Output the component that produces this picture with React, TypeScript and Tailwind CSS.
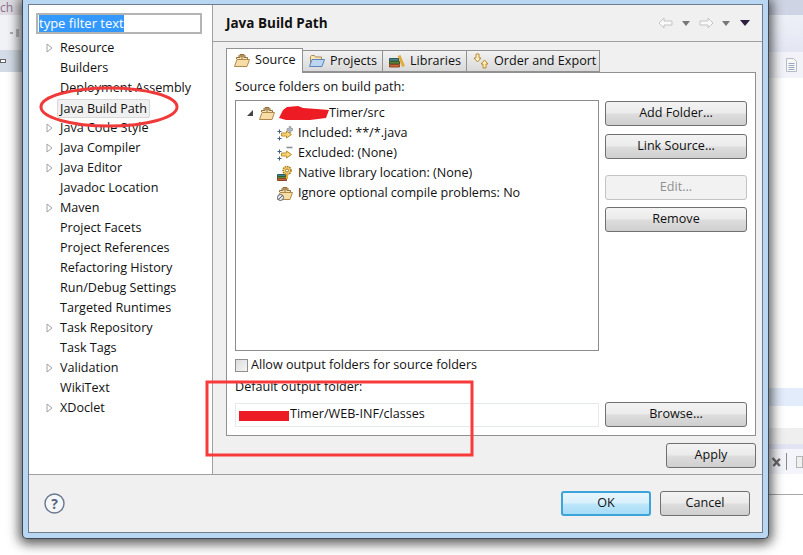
const TREE: [string, boolean][] = [
  ["Resource", true],
  ["Builders", false],
  ["Deployment Assembly", false],
  ["Java Build Path", false],
  ["Java Code Style", true],
  ["Java Compiler", true],
  ["Java Editor", true],
  ["Javadoc Location", false],
  ["Maven", true],
  ["Project Facets", false],
  ["Project References", false],
  ["Refactoring History", false],
  ["Run/Debug Settings", false],
  ["Targeted Runtimes", false],
  ["Task Repository", true],
  ["Task Tags", false],
  ["Validation", true],
  ["WikiText", false],
  ["XDoclet", true],
];

function SourceFolder({ blocked }: { blocked?: boolean }) {
  return (
    <svg width="16" height="15" viewBox="0 0 16 15" className="shrink-0">
      <path d="M2.5 6V4.5h3.5V1.5h4V4.5h3.5V7" fill="#f6e2b8" stroke="#94713a" />
      <path d="M4 3h8M8 1v5" stroke="#94713a" fill="none" />
      <path d="M.5 13.5L3 6.5h12.5L13 13.5z" fill="#f7dca6" stroke="#b08a4c" />
      {blocked && (
        <>
          <circle cx="3.5" cy="11.5" r="3" fill="#e5e7eb" stroke="#5b6472" />
          <path d="M1.5 13.5l4-4" stroke="#5b6472" />
        </>
      )}
    </svg>
  );
}

function BlueFolder() {
  return (
    <svg width="16" height="14" viewBox="0 0 16 14" className="shrink-0">
      <path d="M1.5 11V2.5l1-1h3l1 1.5h6v2.5" fill="#fbe7b8" stroke="#a98d55" />
      <path d="M.5 12.5L3 5.5h12.5L13 12.5z" fill="#bcd6f2" stroke="#5f86b8" />
    </svg>
  );
}

function Books() {
  return (
    <svg width="16" height="14" viewBox="0 0 16 14" className="shrink-0">
      <path d="M10 1.5l4.5 11" stroke="#e2a93b" strokeWidth="3" fill="none" />
      <path d="M.5 4.5h9v2.5h-9z" fill="#4a8a8c" stroke="#2e5a60" />
      <path d="M.5 7.5h10v2.5H.5z" fill="#5f7f3a" stroke="#3f5a28" />
      <path d="M.5 10.5h10v2.5H.5z" fill="#c9683a" stroke="#8a4526" />
    </svg>
  );
}

function UpDown() {
  return (
    <svg width="16" height="16" viewBox="0 0 16 16" className="shrink-0">
      <path d="M3 1h3v4h2l-3.5 4L1 5h2z" fill="#fdf3cf" stroke="#b98a2f" />
      <path d="M10 15h3v-4h2l-3.5-4L8 11h2z" fill="#fdeeb8" stroke="#b98a2f" />
    </svg>
  );
}

function FilterIcon({ plus }: { plus?: boolean }) {
  return (
    <svg width="16" height="15" viewBox="0 0 16 15" className="shrink-0">
      <path d="M.5 5.5h4M2.5 3.5v4M.5 12.5h4M2.5 10.5v4" stroke="#3f5f7f" fill="none" />
      <path d="M4.5 7h5V5l5 3.5-5 3.5v-2h-5z" fill="#f8d577" stroke="#bb8f33" />
      {plus ? (
        <path d="M10 2.5h2V.5h2v2h2v2h-2v2h-2v-2h-2z" fill="#b5b9c0" stroke="#7c828c" strokeWidth=".5" />
      ) : (
        <path d="M9.500 1.500h6" stroke="#8a8f98" strokeWidth="1.600" fill="none" />
      )}
    </svg>
  );
}

function NativeLib() {
  return (
    <svg width="16" height="16" viewBox="0 0 16 16" className="shrink-0">
      <path d="M.5 9.500h8v2h-8z" fill="#3f8a8c" stroke="#2e5a60" />
      <path d="M.5 11.500h9v2h-9z" fill="#5f8f3a" stroke="#3f5a28" />
      <path d="M.5 13.500h9v2h-9z" fill="#c9683a" stroke="#8a4526" />
      <circle cx="10" cy="5.500" r="4" fill="#f3cf72" stroke="#a87f2c" strokeWidth="1.600" strokeDasharray="1.500 .8" />
      <circle cx="10" cy="5.500" r="1.500" fill="#fff" stroke="#a87f2c" />
      <path d="M10 9v5" stroke="#e2a93b" strokeWidth="2" />
    </svg>
  );
}

function Arrow({ open }: { open?: boolean }) {
  return open ? (
    <svg width="8" height="8" viewBox="0 0 8 8" className="shrink-0">
      <path d="M1 7h6V1z" fill="#444" />
    </svg>
  ) : (
    <svg width="7" height="10" viewBox="0 0 7 10" className="shrink-0">
      <path d="M1 1l5 4-5 4z" fill="#fff" stroke="#a3a3a3" />
    </svg>
  );
}

function Btn({ label, width = "w-[142px]", disabled }: { label: string; width?: string; disabled?: boolean }) {
  return (
    <div
      className={`flex h-[25px] items-center justify-center rounded-[3px] border text-[12.6px] ${width} ${
        disabled
          ? "border-[#c4c4c4] bg-[#f2f2f2] text-[#909090]"
          : "border-[#707070] bg-[linear-gradient(#f3f3f3_0%,#ebebeb_48%,#dddddd_52%,#cfcfcf_100%)] text-[#111]"
      }`}
    >
      {label}
    </div>
  );
}

function TabItem({ label, icon, width, active }: { label: string; icon: React.ReactNode; width: string; active?: boolean }) {
  return (
    <div
      className={`flex items-center gap-[5px] border border-[#919191] text-[12.6px] ${width} ${
        active
          ? "relative z-10 -mb-px h-[25px] border-b-0 bg-white pb-[2px] pl-[7px]"
          : "h-[22px] border-l-0 bg-[linear-gradient(#f2f2f2,#d9d9d9)] pl-[6px]"
      }`}
    >
      {icon}
      <span>{label}</span>
    </div>
  );
}

const ROWS = [
  { text: "Included: **/*.java", icon: <FilterIcon plus /> },
  { text: "Excluded: (None)", icon: <FilterIcon /> },
  { text: "Native library location: (None)", icon: <NativeLib /> },
  { text: "Ignore optional compile problems: No", icon: <SourceFolder blocked /> },
];

export default function App() {
  return (
    <div className="relative h-[555px] w-[803px] overflow-hidden bg-white font-['Open_Sans',sans-serif] text-[#111]">
      {/* windows behind the dialog */}
      <div className="absolute left-0 top-0 flex h-full w-[22px] flex-col bg-white">
        <div className="h-[15px] bg-[#dfdde3] text-[12px] leading-[15px] text-[#8a6f8c]">ch</div>
        <div className="flex h-[35px] items-center justify-end gap-[3px] bg-[#f1f2f5] pr-[3px]">
          <span className="h-[2px] w-[3px] bg-[#aaa]" />
          <span className="h-[8px] w-[3px] bg-[#bbb]" />
        </div>
        <div className="flex h-[22px] items-center bg-[#d3dbe6]">
          <div className="h-[4px] w-[6px] border border-[#666] bg-white" />
        </div>
      </div>
      <div className="absolute right-0 top-0 flex h-full w-[34px] flex-col bg-white">
        <div className="h-[15px] bg-[#cfd4e4]" />
        <div className="h-[37px] bg-[linear-gradient(#eef0f8,#e4e7f3)]" />
        <div className="flex h-[26px] items-center justify-end bg-[#f2f3f8] pr-[6px]">
          <svg width="11" height="14" viewBox="0 0 11 14">
            <path d="M.5.500h7l3 3v10H.5z" fill="#f8f8f4" stroke="#b5bcc8" />
            <path d="M2.500 5.500h6M2.500 7.500h6M2.500 9.500h6M2.500 11.500h6" stroke="#9aa8bf" />
          </svg>
        </div>
        <div className="mt-[310px] h-[18px] bg-[#e2ecfa]" />
        <div className="mt-[22px] h-[16px] bg-[#efefef]" />
        <div className="h-[5px] bg-[#e2e4f3]" />
        <div className="flex h-[25px] items-center gap-[5px] bg-[#f4f5fa] pl-[2px]">
          <svg width="13" height="14" viewBox="0 0 13 14">
            <path d="M2 2l9 10M11 3L3 12" stroke="#6b6b6b" strokeWidth="3" fill="none" />
          </svg>
          <div className="h-[17px] w-px bg-[#8a8a8a]" />
          <div className="ml-[4px] h-[12px] w-[8px] border border-[#b5b5b5] bg-[#f0f0f0]" />
        </div>
        <div className="mt-[20px] h-px bg-[#a8a8a8]" />
      </div>

      {/* dialog */}
      <div className="absolute left-[22px] top-0 h-[539px] w-[747px] rounded-b-[5px] border border-t-0 border-[#3f4a55] bg-[#b9d7f3] px-[5px] pb-[5px] pt-[4px] shadow-[0_2px_12px_3px_rgba(0,0,0,0.65)]">
        <div className="flex h-full flex-col border border-[#6f7d8c] bg-[#f0f0f0]">
          <div className="flex min-h-0 flex-1">
            {/* preference tree */}
            <div className="flex w-[184px] shrink-0 flex-col border-r border-[#a0a0a0] bg-white pl-[7px] pt-[8px]">
              <div className="flex h-[21px] w-[166px] items-center border-2 border-[#b4b4b4] px-px text-[13px]">
                <span className="bg-[#3399ff] leading-[17px] text-white">type filter text</span>
              </div>
              <div className="mt-[4px] flex flex-col">
                {TREE.map(([name, arrow]) => (
                  <div key={name} className="flex h-[20px] items-center text-[12.6px]">
                    <div className="flex w-[24px] justify-center pl-[2px]">{arrow && <Arrow />}</div>
                    <span
                      className={
                        name === "Java Build Path"
                          ? "-ml-[3px] rounded-[2px] border border-[#d9d9d9] bg-[#f0f0f0] px-[2px] leading-[17px]"
                          : ""
                      }
                    >
                      {name}
                    </span>
                  </div>
                ))}
              </div>
            </div>

            {/* property page */}
            <div className="flex min-w-0 flex-1 flex-col">
              <div className="flex h-[37px] shrink-0 items-center justify-between border-b border-[#a0a0a0] pl-[13px] pr-[12px]">
                <span className="text-[13.5px] font-bold">Java Build Path</span>
                <div className="flex items-center">
                  <svg width="15" height="12" viewBox="0 0 15 12">
                    <path d="M1 6l5-5v3h8v4H6v3z" fill="#fafafa" stroke="#c4c4c4" />
                  </svg>
                  <svg width="8" height="5" viewBox="0 0 8 5" className="ml-[9px]">
                    <path d="M0 0h8L4 5z" fill="#777" />
                  </svg>
                  <svg width="15" height="12" viewBox="0 0 15 12" className="ml-[9px]">
                    <path d="M14 6L9 1v3H1v4h8v3z" fill="#fafafa" stroke="#c4c4c4" />
                  </svg>
                  <svg width="8" height="5" viewBox="0 0 8 5" className="ml-[8px]">
                    <path d="M0 0h8L4 5z" fill="#777" />
                  </svg>
                  <svg width="10" height="6" viewBox="0 0 10 6" className="ml-[10px]">
                    <path d="M0 0h10L5 6z" fill="#2d2040" />
                  </svg>
                </div>
              </div>

              <div className="flex min-h-0 flex-1 flex-col pl-[13px] pr-[6px] pt-[6px]">
                <div className="flex items-end">
                  <TabItem label="Source" width="w-[77px]" icon={<SourceFolder />} active />
                  <TabItem label="Projects" width="w-[80px]" icon={<BlueFolder />} />
                  <TabItem label="Libraries" width="w-[84px]" icon={<Books />} />
                  <TabItem label="Order and Export" width="w-[133px]" icon={<UpDown />} />
                </div>
                <div className="flex h-[364px] shrink-0 flex-col border border-[#919191] bg-white px-[8px]">
                  <div className="mt-[5px] text-[12.6px] leading-[18px]">Source folders on build path:</div>
                  <div className="mt-[4px] flex min-h-0 gap-[6px]">
                    <div className="flex h-[251px] w-[364px] shrink-0 flex-col border border-[#8c8c8c] pl-[10px] pt-[2px] text-[12.6px]">
                      <div className="flex h-[20px] items-center gap-[5px]">
                        <Arrow open />
                        <SourceFolder />
                        <span className="relative pl-[49px]">
                          <svg width="52" height="14" viewBox="0 0 52 14" className="absolute -left-[2px] top-[2px]">
                            <path d="M1 12L5 4l4-3 11-1 5 2 14 1 12 1-3 8-16 2H8z" fill="#ed1c24" />
                          </svg>
                          Timer/src
                        </span>
                      </div>
                      {ROWS.map((row) => (
                        <div key={row.text} className="flex h-[20px] items-center gap-[5px] pl-[31px]">
                          {row.icon}
                          <span>{row.text}</span>
                        </div>
                      ))}
                    </div>
                    <div className="mt-px flex flex-col">
                      <Btn label="Add Folder..." />
                      <div className="mt-[8px]">
                        <Btn label="Link Source..." />
                      </div>
                      <div className="mt-[16px]">
                        <Btn label="Edit..." disabled />
                      </div>
                      <div className="mt-[7px]">
                        <Btn label="Remove" />
                      </div>
                    </div>
                  </div>
                  <div className="mt-[6px] flex h-[16px] items-center gap-[3px] text-[12.6px]">
                    <div className="h-[13px] w-[13px] border border-[#8e8f8f] bg-[linear-gradient(135deg,#dcdcdc,#f5f5f5)]" />
                    <span>Allow output folders for source folders</span>
                  </div>
                  <div className="mt-[5px] text-[12.6px] leading-[18px]">Default output folder:</div>
                  <div className="mt-[6px] flex items-center gap-[6px]">
                    <div className="relative flex h-[24px] w-[364px] items-center border border-[#e3e9ef] pl-[54px] text-[12.6px]">
                      <span className="absolute left-[3px] top-[7px] h-[10px] w-[50px] bg-[#ed1c24]" />
                      Timer/WEB-INF/classes
                    </div>
                    <Btn label="Browse..." />
                  </div>
                </div>
                <div className="mt-[7px] flex justify-end">
                  <Btn label="Apply" width="w-[90px]" />
                </div>
              </div>
            </div>
          </div>

          {/* dialog buttons */}
          <div className="flex h-[58px] shrink-0 items-center justify-between border-t border-[#a0a0a0] pl-[15px] pr-[12px]">
            <svg width="21" height="21" viewBox="0 0 21 21">
              <circle cx="10.500" cy="10.500" r="9.500" fill="#f4f6f9" stroke="#6b7a90" strokeWidth="1.400" />
              <text x="10.500" y="15.500" textAnchor="middle" fontSize="14" fontWeight="700" fill="#56657d" fontFamily="Open Sans">?</text>
            </svg>
            <div className="flex gap-[9px]">
              <div className="flex h-[25px] w-[90px] items-center justify-center rounded-[3px] border-2 border-[#3ca4d8] bg-[linear-gradient(#e8f6fd,#d8f0fb_48%,#bde6fa_52%,#a7dcf7)] text-[12.6px]">
                OK
              </div>
              <Btn label="Cancel" width="w-[90px]" />
            </div>
          </div>
        </div>
      </div>

      {/* red marks drawn on top of the screenshot */}
      <svg width="803" height="555" className="pointer-events-none absolute left-0 top-0">
        <ellipse cx="109" cy="107" rx="68" ry="19" fill="none" stroke="#f03a3a" strokeWidth="3" />
        <rect x="207" y="382" width="265" height="73" fill="none" stroke="#f93a3a" strokeWidth="3" />
      </svg>
    </div>
  );
}
